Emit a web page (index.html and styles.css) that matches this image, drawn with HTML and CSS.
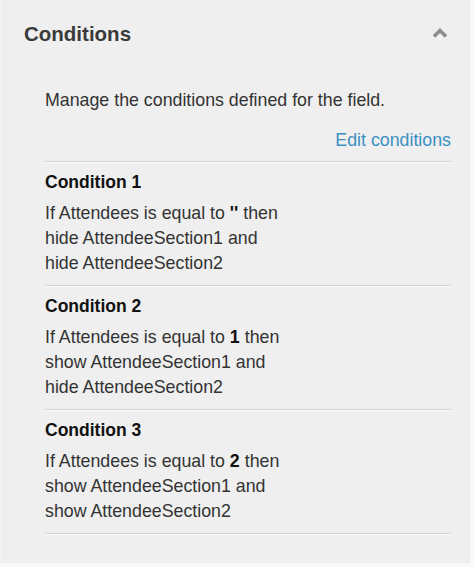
FILE: index.html
```html
<!DOCTYPE html>
<html lang="en">
<head>
<meta charset="utf-8">
<title>Conditions</title>
<link rel="stylesheet" href="styles.css">
</head>
<body>
<section class="panel">
  <header class="panel-header">
    <h2 class="panel-title">Conditions</h2>
    <svg class="chevron" width="18" height="12" viewBox="0 0 18 12" aria-hidden="true">
      <polyline points="3,9.5 9,3.5 15,9.5" fill="none" stroke="#8c8c8c" stroke-width="3.6" stroke-linecap="butt" stroke-linejoin="miter"/>
    </svg>
  </header>
  <div class="panel-body">
    <p class="desc">Manage the conditions defined for the field.</p>
    <div class="actions"><a class="edit-link" href="#">Edit conditions</a></div>
    <ul class="cond-list">
      <li class="cond">
        <h3 class="cond-title">Condition 1</h3>
        <p class="cond-text">If Attendees is equal to <b>''</b> then<br>hide AttendeeSection1 and<br>hide AttendeeSection2</p>
      </li>
      <li class="cond">
        <h3 class="cond-title">Condition 2</h3>
        <p class="cond-text">If Attendees is equal to <b>1</b> then<br>show AttendeeSection1 and<br>hide AttendeeSection2</p>
      </li>
      <li class="cond">
        <h3 class="cond-title">Condition 3</h3>
        <p class="cond-text">If Attendees is equal to <b>2</b> then<br>show AttendeeSection1 and<br>show AttendeeSection2</p>
      </li>
    </ul>
  </div>
</section>
</body>
</html>
```

FILE: styles.css
```css
html, body {
  margin: 0;
  padding: 0;
}
body {
  background: #f8f8f8;
  font-family: "Liberation Sans", Arial, sans-serif;
  color: #333333;
}
.panel {
  width: 470px;
  height: 563px;
  box-sizing: border-box;
  background: #efefef;
  border-left: 1px solid #f3f3f3;
}
.panel-header {
  display: flex;
  justify-content: space-between;
  align-items: flex-start;
  padding: 22px 21px 0 23px;
}
.panel-title {
  margin: 0;
  font-size: 20.5px;
  line-height: 24px;
  font-weight: bold;
  color: #3a3a3a;
}
.chevron {
  display: block;
  margin-top: 5px;
}
.panel-body {
  padding: 0 19px 0 44px;
}
.desc {
  margin: 42px 0 0;
  font-size: 17.8px;
  line-height: 25px;
  color: #333333;
}
.actions {
  display: flex;
  justify-content: flex-end;
  margin-top: 15px;
}
.edit-link {
  font-size: 17.8px;
  line-height: 25px;
  color: #3b90c2;
  text-decoration: none;
}
.cond-list {
  list-style: none;
  margin: 8px 0 0;
  padding: 0;
  border-top: 1px solid #d5d5d5;
  box-shadow: inset 0 1px 0 #f9f9f9;
}
.cond {
  padding: 8px 0 9px;
  border-bottom: 1px solid #d5d5d5;
  box-shadow: 0 1px 0 #f9f9f9;
}
.cond-title {
  margin: 0;
  font-size: 17.5px;
  line-height: 25px;
  font-weight: bold;
  color: #111111;
}
.cond-text {
  margin: 6px 0 0;
  font-size: 17.8px;
  line-height: 25px;
  color: #333333;
}
.cond-text b {
  color: #111111;
}
```
